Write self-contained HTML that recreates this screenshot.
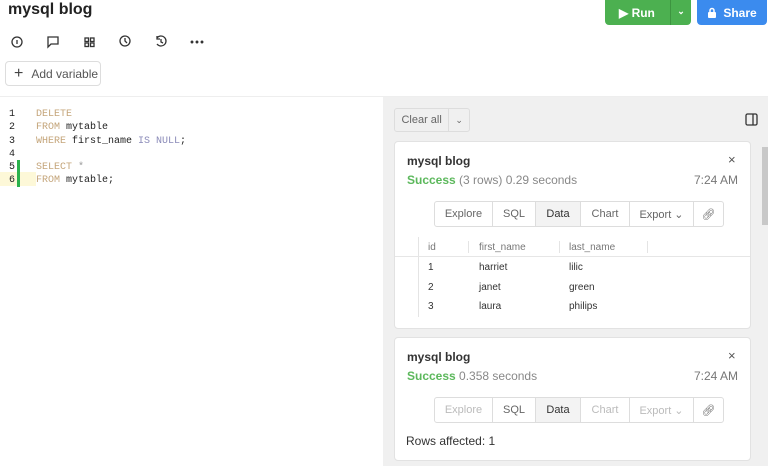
<!DOCTYPE html>
<html><head><style>
*{box-sizing:border-box;margin:0;padding:0}
body{width:768px;height:466px;overflow:hidden;background:#fff;font-family:"Liberation Sans",sans-serif;position:relative;color:#333}
.a{position:absolute}
.code{font-family:"Liberation Mono",monospace;font-size:10px;line-height:13.3px}
.kw{color:#c4a57a}
.btnbar{display:flex;border:1px solid #ddd;border-radius:3px;background:#fff;font-size:11px;color:#666}
.btnbar div{border-right:1px solid #ddd;display:flex;align-items:center;justify-content:center}
.btnbar div:last-child{border-right:none}
.card{background:#fff;border:1px solid #e2e2e2;border-radius:4px}
</style></head><body>
<div class="a" style="left:8px;top:1px;font-size:16px;font-weight:bold;color:#222">mysql blog</div>
<svg class="a" style="left:0;top:32px" width="220" height="20" fill="none" stroke="#333" stroke-width="1.3">
<circle cx="17" cy="10" r="5"/><line x1="17" y1="8" x2="17" y2="12"/>
<path d="M48 5h10v7h-7l-3 3z"/>
<rect x="85" y="6" width="3.5" height="3.5"/><rect x="90.5" y="6" width="3.5" height="3.5"/><rect x="85" y="11" width="3.5" height="3.5"/><rect x="90.5" y="11" width="3.5" height="3.5"/>
<circle cx="125" cy="9" r="5"/><path d="M125 6v3l2 2"/>
<path d="M157 6a5 5 0 1 1 0 6M157 4v3h3M161 7v3l2 1"/>
<circle cx="192" cy="10" r=".8" fill="#333"/><circle cx="197" cy="10" r=".8" fill="#333"/><circle cx="202" cy="10" r=".8" fill="#333"/>
</svg>
<div class="a" style="left:5px;top:61px;width:96px;height:25px;border:1px solid #ddd;border-radius:4px;font-size:12px;color:#555;display:flex;align-items:center;padding-left:8px"><span style="font-size:16px;margin-right:8px;color:#444">+</span>Add variable</div>
<div class="a" style="left:605px;top:0;width:86px;height:25px;background:#4cb050;border-radius:0 0 4px 4px;color:#fff;font-size:12px;font-weight:bold;display:flex;align-items:center">
<span style="margin-left:14px">▶ Run</span><span style="position:absolute;left:65px;top:0;height:25px;border-left:1px solid #3d9440;width:21px;text-align:center;line-height:23px;font-size:9px">⌄</span></div>
<div class="a" style="left:697px;top:0;width:70px;height:25px;background:#3b8bee;border-radius:0 0 4px 4px;color:#fff;font-size:12px;font-weight:bold;display:flex;align-items:center;justify-content:center">
<svg width="10" height="11" style="margin-right:6px"><rect x="1" y="5" width="8" height="6" rx="1" fill="#fff"/><path d="M3 5V3.5a2 2 0 0 1 4 0V5" stroke="#fff" stroke-width="1.5" fill="none"/></svg>Share</div>
<div class="a" style="left:0;top:96px;width:768px;height:1px;background:#eee"></div>
<div class="a" style="left:0;top:172px;width:36px;height:14px;background:#fdf8d8"></div>
<div class="a" style="left:17px;top:160px;width:3px;height:27px;background:#2bb24c"></div>
<div class="a code" style="left:9px;top:108px;color:#222">1<br>2<br>3<br>4<br>5<br>6</div>
<div class="a code" style="left:36px;top:108px;color:#222"><span class="kw">DELETE</span><br><span class="kw">FROM</span> mytable<br><span class="kw">WHERE</span> first_name <span style="color:#8a8ab8">IS NULL</span>;<br>&nbsp;<br><span class="kw">SELECT</span> <span style="color:#999">*</span><br><span class="kw">FROM</span> mytable;</div>
<div class="a" style="left:383px;top:97px;width:385px;height:369px;background:#f0f0f0"></div>
<div class="a btnbar" style="left:394px;top:108px;width:76px;height:24px;background:#f0f0f0"><div style="width:55px">Clear all</div><div style="width:20px;font-size:9px">⌄</div></div>
<svg class="a" style="left:745px;top:113px" width="13" height="13" fill="none" stroke="#333" stroke-width="1.3"><rect x="1" y="1" width="11" height="11" rx="1.5"/><line x1="8" y1="1" x2="8" y2="12"/></svg>
<div class="a" style="left:762px;top:147px;width:6px;height:78px;background:#c8c8c8"></div>
<div class="a card" style="left:394px;top:141px;width:357px;height:188px"></div>
<div class="a" style="left:407px;top:154px;font-size:12px;font-weight:bold;color:#333">mysql blog</div>
<div class="a" style="left:728px;top:152px;font-size:13px;color:#555">×</div>
<div class="a" style="left:407px;top:173px;font-size:12px;color:#888"><span style="color:#5cb85c;font-weight:bold">Success</span> (3 rows) 0.29 seconds</div>
<div class="a" style="left:694px;top:173px;font-size:12px;color:#777">7:24 AM</div>
<div class="a btnbar" style="left:434px;top:201px;width:290px;height:26px"><div style="width:58px">Explore</div><div style="width:43px">SQL</div><div style="width:45px;background:#f3f3f3;color:#333">Data</div><div style="width:49px">Chart</div><div style="width:64px">Export ⌄</div><div style="flex:1">🔗︎</div></div>
<div class="a" style="left:418px;top:237px;width:1px;height:80px;background:#e4e4e4"></div>
<div class="a" style="left:395px;top:256px;width:355px;height:1px;background:#e6e6e6"></div>
<div class="a" style="left:468px;top:241px;width:1px;height:12px;background:#e4e4e4"></div>
<div class="a" style="left:559px;top:241px;width:1px;height:12px;background:#e4e4e4"></div>
<div class="a" style="left:647px;top:241px;width:1px;height:12px;background:#e4e4e4"></div>
<div class="a" style="left:428px;top:242px;font-size:10px;color:#777;line-height:12px">id</div>
<div class="a" style="left:479px;top:242px;font-size:10px;color:#777;line-height:12px">first_name</div>
<div class="a" style="left:569px;top:242px;font-size:10px;color:#777;line-height:12px">last_name</div>
<div class="a" style="left:428px;top:258px;font-size:10px;color:#333;line-height:19.7px">1<br>2<br>3</div>
<div class="a" style="left:479px;top:258px;font-size:10px;color:#333;line-height:19.7px">harriet<br>janet<br>laura</div>
<div class="a" style="left:569px;top:258px;font-size:10px;color:#333;line-height:19.7px">lilic<br>green<br>philips</div>
<div class="a card" style="left:394px;top:337px;width:357px;height:124px"></div>
<div class="a" style="left:407px;top:350px;font-size:12px;font-weight:bold;color:#333">mysql blog</div>
<div class="a" style="left:728px;top:348px;font-size:13px;color:#555">×</div>
<div class="a" style="left:407px;top:369px;font-size:12px;color:#888"><span style="color:#5cb85c;font-weight:bold">Success</span> 0.358 seconds</div>
<div class="a" style="left:694px;top:369px;font-size:12px;color:#777">7:24 AM</div>
<div class="a btnbar" style="left:434px;top:397px;width:290px;height:26px"><div style="width:58px;color:#bbb">Explore</div><div style="width:43px">SQL</div><div style="width:45px;background:#f3f3f3;color:#333">Data</div><div style="width:49px;color:#bbb">Chart</div><div style="width:64px;color:#bbb">Export ⌄</div><div style="flex:1">🔗︎</div></div>
<div class="a" style="left:406px;top:434px;font-size:12px;color:#333">Rows affected: 1</div>
</body></html>
